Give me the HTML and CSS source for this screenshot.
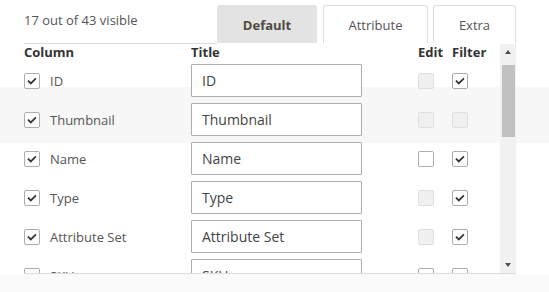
FILE: index.html
```html
<!DOCTYPE html>
<html lang="en">
<head>
<meta charset="utf-8">
<title>Columns</title>
<link rel="stylesheet" href="styles.css">
</head>
<body>
<div class="panel">
  <div class="top">
    <div class="summary">17 out of 43 visible</div>
    <div class="tabs">
      <div class="tab tab-default active">Default</div>
      <div class="tab tab-attr">Attribute</div>
      <div class="tab tab-extra">Extra</div>
    </div>
  </div>
  <div class="table-wrap">
    <div class="table">
      <div class="row head">
        <div class="th">Column</div>
        <div class="th">Title</div>
        <div class="th">Edit</div>
        <div class="th">Filter</div>
      </div>

      <div class="row">
        <label class="col"><span class="cb checked"><svg viewBox="0 0 16 16"><path d="M4 8.2 L6.6 10.8 L11.8 5.6"/></svg></span>ID</label>
        <div><input class="title" value="ID" readonly></div>
        <div><span class="cb disabled"></span></div>
        <div><span class="cb checked"><svg viewBox="0 0 16 16"><path d="M4 8.2 L6.6 10.8 L11.8 5.6"/></svg></span></div>
      </div>

      <div class="row">
        <label class="col"><span class="cb checked"><svg viewBox="0 0 16 16"><path d="M4 8.2 L6.6 10.8 L11.8 5.6"/></svg></span>Thumbnail</label>
        <div><input class="title" value="Thumbnail" readonly></div>
        <div><span class="cb disabled"></span></div>
        <div><span class="cb disabled"></span></div>
      </div>

      <div class="row">
        <label class="col"><span class="cb checked"><svg viewBox="0 0 16 16"><path d="M4 8.2 L6.6 10.8 L11.8 5.6"/></svg></span>Name</label>
        <div><input class="title" value="Name" readonly></div>
        <div><span class="cb"></span></div>
        <div><span class="cb checked"><svg viewBox="0 0 16 16"><path d="M4 8.2 L6.6 10.8 L11.8 5.6"/></svg></span></div>
      </div>

      <div class="row">
        <label class="col"><span class="cb checked"><svg viewBox="0 0 16 16"><path d="M4 8.2 L6.6 10.8 L11.8 5.6"/></svg></span>Type</label>
        <div><input class="title" value="Type" readonly></div>
        <div><span class="cb disabled"></span></div>
        <div><span class="cb checked"><svg viewBox="0 0 16 16"><path d="M4 8.2 L6.6 10.8 L11.8 5.6"/></svg></span></div>
      </div>

      <div class="row">
        <label class="col"><span class="cb checked"><svg viewBox="0 0 16 16"><path d="M4 8.2 L6.6 10.8 L11.8 5.6"/></svg></span>Attribute Set</label>
        <div><input class="title" value="Attribute Set" readonly></div>
        <div><span class="cb disabled"></span></div>
        <div><span class="cb checked"><svg viewBox="0 0 16 16"><path d="M4 8.2 L6.6 10.8 L11.8 5.6"/></svg></span></div>
      </div>

      <div class="row">
        <label class="col"><span class="cb checked"><svg viewBox="0 0 16 16"><path d="M4 8.2 L6.6 10.8 L11.8 5.6"/></svg></span>SKU</label>
        <div><input class="title" value="SKU" readonly></div>
        <div><span class="cb"></span></div>
        <div><span class="cb checked"><svg viewBox="0 0 16 16"><path d="M4 8.2 L6.6 10.8 L11.8 5.6"/></svg></span></div>
      </div>
    </div>
    <div class="scrollbar">
      <div class="sb-btn"><span class="arrow up"></span></div>
      <div class="sb-track"><div class="sb-thumb"></div></div>
      <div class="sb-btn"><span class="arrow down"></span></div>
    </div>
  </div>
</div>
</body>
</html>
```

FILE: styles.css
```css
html, body {
  margin: 0;
  padding: 0;
}
body {
  width: 549px;
  height: 292px;
  overflow: hidden;
  font-family: "Open Sans", "Noto Sans", sans-serif;
  color: #555;
  background: linear-gradient(to bottom,
    #ffffff 0, #ffffff 87px,
    #f7f7f7 87px, #f7f7f7 143px,
    #ffffff 143px, #ffffff 274px,
    #fafafa 274px);
}
.panel {
  margin-left: 24px;
  width: 492px;
}
.top {
  display: flex;
  height: 44px;
}
.summary {
  width: 193px;
  box-sizing: border-box;
  height: 44px;
  padding-top: 11px;
  font-size: 13px;
  line-height: 18px;
  color: #555;
  border-bottom: 1px solid #dcdcdc;
}
.tabs {
  display: flex;
  gap: 5px;
  padding-top: 5px;
}
.tab {
  box-sizing: border-box;
  height: 38px;
  display: flex;
  align-items: center;
  justify-content: center;
  font-size: 13px;
  color: #555;
  border: 1px solid #dedede;
  border-bottom: none;
  border-radius: 3px 3px 0 0;
  background: #fff;
}
.tab-default {
  width: 100px;
  margin-right: 1px;
}
.tab-attr {
  width: 105px;
}
.tab-extra {
  width: 83px;
}
.tab.active {
  background: #e3e3e3;
  border-color: #e3e3e3;
  font-weight: 700;
  color: #514943;
}
.table-wrap {
  display: flex;
  height: 229px;
  border-bottom: 1px solid #dcdcdc;
  overflow: hidden;
}
.table {
  width: 476px;
  overflow: hidden;
}
.row {
  display: grid;
  grid-template-columns: 167px 227px 34px 48px;
  height: 39px;
  align-items: center;
}
.row.head {
  height: 17px;
  align-items: start;
}
.th {
  font-size: 13px;
  line-height: 17px;
  font-weight: 700;
  color: #333;
}
.col {
  display: flex;
  align-items: center;
  gap: 10px;
  font-size: 13px;
  color: #555;
}
.title {
  display: block;
  box-sizing: border-box;
  width: 171px;
  height: 33px;
  margin: 0;
  padding: 0 10px;
  border: 1px solid #adadad;
  border-radius: 1px;
  background: #fff;
  font-family: "Open Sans", "Noto Sans", sans-serif;
  font-size: 14px;
  color: #444;
  outline: none;
}
.cb {
  display: flex;
  box-sizing: border-box;
  width: 16px;
  height: 16px;
  border: 1px solid #adadad;
  border-radius: 2px;
  background: #fff;
  flex: none;
}
.cb svg {
  width: 14px;
  height: 14px;
  fill: none;
  stroke: #333;
  stroke-width: 1.9;
  stroke-linecap: square;
}
.cb.disabled {
  background: #f0f0f0;
  border-color: #dfdfdf;
}
.scrollbar {
  width: 16px;
  display: flex;
  flex-direction: column;
  background: #f1f1f1;
}
.sb-btn {
  height: 16px;
  display: flex;
  align-items: center;
  justify-content: center;
  flex: none;
}
.sb-track {
  flex: 1;
  padding: 5px 1px 0 2px;
}
.sb-thumb {
  height: 72px;
  background: #c1c1c1;
}
.arrow {
  width: 0;
  height: 0;
  border-left: 3.5px solid transparent;
  border-right: 3.5px solid transparent;
}
.arrow.up {
  border-bottom: 4px solid #505050;
}
.arrow.down {
  border-top: 4px solid #505050;
}
```
